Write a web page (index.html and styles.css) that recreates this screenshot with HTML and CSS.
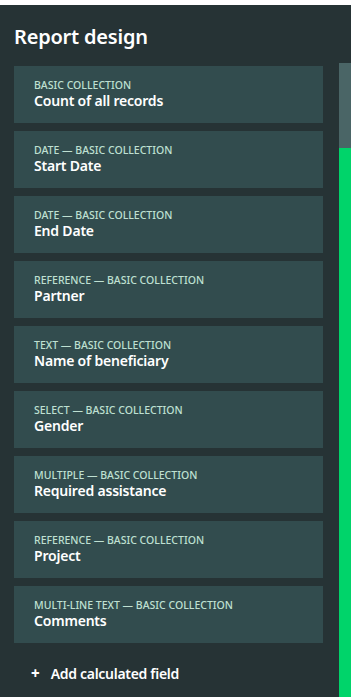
FILE: index.html
```html
<!DOCTYPE html>
<html lang="en">
<head>
    <meta charset="UTF-8">
    <meta name="viewport" content="width=device-width, initial-scale=1.0">
    <title>Report design</title>
    <link rel="stylesheet" href="styles.css">
</head>
<body>

<div class="panel">
    <div class="main">
        <h2 class="title">Report design</h2>

        <div class="fields">
            <div class="field">
                <p class="field-type">Basic collection</p>
                <p class="field-name">Count of all records</p>
            </div>
            <div class="field">
                <p class="field-type">Date — Basic collection</p>
                <p class="field-name">Start Date</p>
            </div>
            <div class="field">
                <p class="field-type">Date — Basic collection</p>
                <p class="field-name">End Date</p>
            </div>
            <div class="field">
                <p class="field-type">Reference — Basic collection</p>
                <p class="field-name">Partner</p>
            </div>
            <div class="field">
                <p class="field-type">Text — Basic collection</p>
                <p class="field-name">Name of beneficiary</p>
            </div>
            <div class="field">
                <p class="field-type">Select — Basic collection</p>
                <p class="field-name">Gender</p>
            </div>
            <div class="field">
                <p class="field-type">Multiple — Basic collection</p>
                <p class="field-name">Required assistance</p>
            </div>
            <div class="field">
                <p class="field-type">Reference — Basic collection</p>
                <p class="field-name">Project</p>
            </div>
            <div class="field">
                <p class="field-type">Multi-line text — Basic collection</p>
                <p class="field-name">Comments</p>
            </div>
        </div>

        <button class="add-field"><span class="plus">+</span> Add calculated field</button>
    </div>

    <div class="scrollbar">
        <div class="thumb"></div>
        <div class="track"></div>
    </div>
</div>

</body>
</html>
```

FILE: styles.css
```css
body {
    font-family: 'Noto Sans', sans-serif;
    background: white;
    margin: 0;
    padding-top: 5px;
}
.panel {
    display: flex;
    background: #263335;
    height: 692px;
    overflow: hidden;
}
.main {
    width: 323px;
    padding-left: 14px;
    box-sizing: border-box;
}
.title {
    color: white;
    font-size: 20px;
    font-weight: 600;
    margin: 0;
    padding: 18px 0 0;
    height: 43px;
    letter-spacing: -0.2px;
}
.fields {
    display: flex;
    flex-direction: column;
    gap: 8px;
}
.field {
    background: #324c4e;
    height: 57px;
    box-sizing: border-box;
    padding: 12px 20px 0;
}
.field-type {
    font-size: 10.5px;
    text-transform: uppercase;
    color: #bfe0d2;
    margin: 0;
    line-height: 14px;
    font-weight: 500;
    letter-spacing: 0;
}
.field-name {
    font-size: 14px;
    font-weight: 600;
    color: white;
    margin: 0;
    line-height: 18px;
    letter-spacing: -0.2px;
}
.add-field {
    background: none;
    border: none;
    color: white;
    font-family: inherit;
    font-size: 14px;
    font-weight: 600;
    padding: 0 0 0 17px;
    margin-top: 20px;
    letter-spacing: -0.3px;
    cursor: pointer;
}
.plus {
    font-weight: 800;
    font-size: 15px;
    margin-right: 8px;
}
.scrollbar {
    margin-left: 16px;
    margin-top: 58px;
    width: 12px;
    display: flex;
    flex-direction: column;
}
.thumb {
    height: 85px;
    background: #4a6566;
}
.track {
    flex: 1;
    background: #00d46a;
}
```
